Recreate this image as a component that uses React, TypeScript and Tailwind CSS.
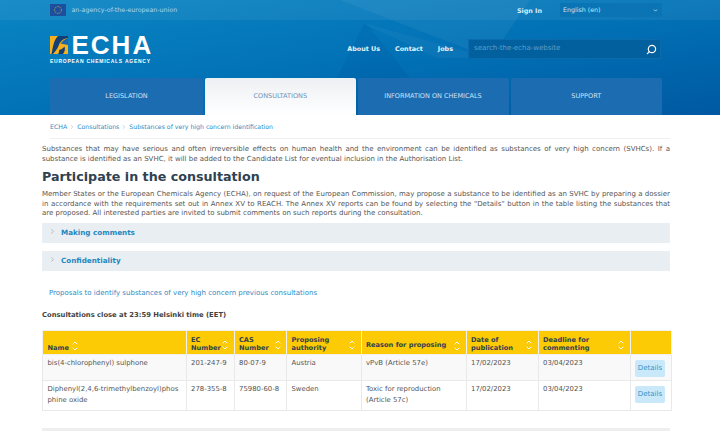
import { ChevronRight, ChevronDown, ChevronUp, Search } from 'lucide-react'

const tabs = [
  { label: 'LEGISLATION', width: 'w-[153px]' },
  { label: 'CONSULTATIONS', width: 'w-[150.5px]' },
  { label: 'INFORMATION ON CHEMICALS', width: 'w-[151px]' },
  { label: 'SUPPORT', width: 'w-[151.5px]' },
]

const columns = [
  { label: ['Name'], width: 'w-[143.5px]' },
  { label: ['EC', 'Number'], width: 'w-[48px]' },
  { label: ['CAS', 'Number'], width: 'w-[52.5px]' },
  { label: ['Proposing', 'authority'], width: 'w-[74.5px]' },
  { label: ['Reason for proposing'], width: 'w-[105px]' },
  { label: ['Date of', 'publication'], width: 'w-[72px]' },
  { label: ['Deadline for', 'commenting'], width: 'w-[92px]' },
  { label: [], width: 'w-[41px]' },
]

const rows = [
  {
    name: 'bis(4-chlorophenyl) sulphone',
    ec: '201-247-9',
    cas: '80-07-9',
    authority: 'Austria',
    reason: 'vPvB (Article 57e)',
    published: '17/02/2023',
    deadline: '03/04/2023',
    height: 'h-[26px]',
    bg: 'bg-[#f9f9f9]',
  },
  {
    name: 'Diphenyl(2,4,6-trimethylbenzoyl)phosphine oxide',
    ec: '278-355-8',
    cas: '75980-60-8',
    authority: 'Sweden',
    reason: 'Toxic for reproduction (Article 57c)',
    published: '17/02/2023',
    deadline: '03/04/2023',
    height: 'h-[30px]',
    bg: 'bg-white',
  },
]

function EuFlag() {
  return (
    <svg width="16" height="12" viewBox="0 0 16 12">
      <rect width="16" height="12" fill="#1d4f9c" />
      <circle cx="8" cy="6" r="3.4" fill="none" stroke="#c9b23c" strokeWidth="0.9" strokeDasharray="0.9 0.9" />
    </svg>
  )
}

function LogoMark() {
  return (
    <svg width="18" height="18" viewBox="0 0 18 18">
      <rect width="18" height="18" fill="#f6b01e" />
      <path d="M8 0H18V2C14 2.5 11 4.5 9.5 7.5C8.5 10 7.5 13.500 3 18H1.500C3 12 3 5 8 0Z" fill="#123f74" />
      <path d="M18 2V9C15.500 8.500 13 8 10.500 7.500C12.500 5 15 3 18 2Z" fill="#1a66a8" />
      <path d="M9 14C11.500 13.500 13 12.500 14.500 10.500C15 12.500 15.500 14.500 13 18H8C9 16.500 9.500 15.500 9 14Z" fill="#123f74" />
    </svg>
  )
}

function SortIcon() {
  return (
    <span className="flex flex-col items-center text-white">
      <ChevronUp size={8} strokeWidth={3} className="-mb-[2px]" />
      <ChevronDown size={8} strokeWidth={3} />
    </span>
  )
}

function Accordion({ title }: { title: string }) {
  return (
    <div className="flex h-5 items-center bg-[#e9eef2] pl-[7px]">
      <ChevronRight size={7} strokeWidth={2} className="-mt-[2px] text-[#8c979f]" />
      <span className="ml-[5px] text-[7.2px] font-bold text-[#1f87c0]">{title}</span>
    </div>
  )
}

function Line({ children }: { children: string }) {
  return <span className="block text-justify [text-align-last:justify]">{children}</span>
}

export default function App() {
  return (
    <div className="h-[432px] w-[720px] overflow-hidden bg-white font-['DejaVu_Sans',sans-serif] text-[7px] leading-[9.5px] text-[#555]">
      <header className="relative h-[115px] overflow-hidden bg-gradient-to-br from-[#0b86c4] via-[#0272b6] to-[#0059a2]">
        {/* background facets */}
        <svg className="absolute inset-0" width="720" height="115" viewBox="0 0 720 115">
          <path d="M340 0H530L490 58Z" fill="#ffffff" fillOpacity="0.05" />
          <path d="M360 22L490 58L437 58Z" fill="#ffffff" fillOpacity="0.04" />
          <path d="M337 78L365 22L440 115H337Z" fill="#003f8c" fillOpacity="0.1" />
        </svg>

        <div className="relative flex h-5 items-start justify-between bg-white/[0.06] pr-[58px] pl-[50px]">
          <div className="flex items-center gap-[5.5px] pt-[4px]">
            <EuFlag />
            <span className="text-[6.3px] text-[#a8d8ee]">an-agency-of-the-european-union</span>
          </div>
          <div className="flex items-start">
            <span className="pt-[7px] text-[6.4px] font-bold text-[#d7edf8]">Sign In</span>
            <div className="mt-[3px] ml-[18px] flex h-[14px] w-[102px] items-center justify-between bg-[#0a74b4] px-[3px] pr-[4px] text-[6.3px] text-[#cfe8f5]">
              English (en)
              <ChevronDown size={5} strokeWidth={4} />
            </div>
          </div>
        </div>

        <div className="relative flex h-[58px] items-start justify-between pr-[59px] pl-[50px]">
          <div className="pt-[16px]">
            <div className="flex h-[18px] items-center">
              <LogoMark />
              <span className="ml-[3.5px] font-['Liberation_Sans',sans-serif] text-[26px] leading-[18px] font-bold tracking-[2px] text-white">
                ECHA
              </span>
            </div>
            <div className="mt-[3.5px] font-['Liberation_Sans',sans-serif] text-[5px] leading-[6px] font-bold tracking-[0.75px] whitespace-nowrap text-white">
              EUROPEAN CHEMICALS AGENCY
            </div>
          </div>
          <div className="flex items-start">
            <nav className="flex gap-[15px] pt-[25px] text-[6.4px] font-bold text-[#e6f3fa]">
              <span>About Us</span>
              <span>Contact</span>
              <span>Jobs</span>
            </nav>
            <div className="mt-[19px] ml-[15px] flex h-5 w-[193px] items-center justify-between border border-[#0a6cac] bg-[#03609f] pr-[3px] pl-[5px]">
              <span className="text-[7px] text-[#5a9fc9]">search-the-echa-website</span>
              <Search size={11} strokeWidth={2.6} className="-scale-x-100 text-white" />
            </div>
          </div>
        </div>

        <nav className="relative flex gap-[2px] pr-[58px] pl-[50px]">
          {tabs.map((tab) => (
            <div
              key={tab.label}
              className={
                tab.label === 'CONSULTATIONS'
                  ? `flex h-[37px] ${tab.width} items-center justify-center rounded-t-[2px] bg-gradient-to-b from-[#edf0f3] to-white text-[6.5px] text-[#6b93bd]`
                  : `flex h-[37px] ${tab.width} items-center justify-center rounded-t-[2px] bg-[#1c6cb2] text-[6.5px] text-[#cfe3f2]`
              }
            >
              {tab.label}
            </div>
          ))}
        </nav>
      </header>

      <main className="pr-[50px] pl-[42px]">
        <div className="ml-2 flex h-6 items-center gap-[2px] border-b border-[#eef0f1] text-[6.2px] text-[#2f8ac4]">
          <span>ECHA</span>
          <ChevronRight size={6} className="text-[#99aaaa]" />
          <span>Consultations</span>
          <ChevronRight size={6} className="text-[#99aaaa]" />
          <span>Substances of very high concern identification</span>
        </div>

        <p className="mt-[6px] w-[628px]">
          <Line>Substances that may have serious and often irreversible effects on human health and the environment can be identified as substances of very high concern (SVHCs). If a</Line>
          substance is identified as an SVHC, it will be added to the Candidate List for eventual inclusion in the Authorisation List.
        </p>
        <h1 className="mt-[4px] text-[12.7px] leading-[18px] font-bold text-[#2f4252]">Participate in the consultation</h1>
        <p className="mt-[4px] w-[628px]">
          <Line>Member States or the European Chemicals Agency (ECHA), on request of the European Commission, may propose a substance to be identified as an SVHC by preparing a dossier</Line>
          <Line>in accordance with the requirements set out in Annex XV to REACH. The Annex XV reports can be found by selecting the "Details" button in the table listing the substances that</Line>
          are proposed. All interested parties are invited to submit comments on such reports during the consultation.
        </p>

        <div className="mt-[4px] flex w-[628px] flex-col gap-2">
          <Accordion title="Making comments" />
          <Accordion title="Confidentiality" />
        </div>

        <div className="mt-[18px] ml-[7px] text-[7px] text-[#2f8ac4]">
          Proposals to identify substances of very high concern previous consultations
        </div>
        <div className="mt-[12.5px] text-[6.8px] font-bold text-[#444]">Consultations close at 23:59 Helsinki time (EET)</div>

        <table className="mt-[9.5px] w-[628px] table-fixed border-collapse">
          <colgroup>
            {columns.map((col, i) => (
              <col key={i} className={col.width} />
            ))}
          </colgroup>
          <thead>
            <tr className="h-[24px] bg-[#fdca06] text-[#33414d]">
              {columns.map((col, i) => (
                <th key={i} className="border border-[#f0f0f0] px-[4.5px] pt-[3px] pb-[1px] text-left align-bottom text-[6.65px] leading-[7.8px] font-bold">
                  {col.label.length > 0 && (
                    <div className={i === 0 ? 'flex items-end gap-[2px]' : 'flex items-center justify-between'}>
                      <span>
                        {col.label.map((line) => (
                          <span key={line} className="block whitespace-nowrap">
                            {line}
                          </span>
                        ))}
                      </span>
                      <SortIcon />
                    </div>
                  )}
                </th>
              ))}
            </tr>
          </thead>
          <tbody>
            {rows.map((row) => (
              <tr key={row.ec} className={`${row.height} ${row.bg} align-top text-[6.9px]`}>
                <td className="border border-[#e9e9e9] px-[4.5px] pt-[3.5px] leading-[10.5px] break-all">{row.name}</td>
                <td className="border border-[#e9e9e9] px-[4.5px] pt-[3.5px] leading-[10.5px]">{row.ec}</td>
                <td className="border border-[#e9e9e9] px-[4.5px] pt-[3.5px] leading-[10.5px]">{row.cas}</td>
                <td className="border border-[#e9e9e9] px-[4.5px] pt-[3.5px] leading-[10.5px]">{row.authority}</td>
                <td className="border border-[#e9e9e9] px-[4.5px] pt-[3.5px] leading-[10.5px]">{row.reason}</td>
                <td className="border border-[#e9e9e9] px-[4.5px] pt-[3.5px] leading-[10.5px]">{row.published}</td>
                <td className="border border-[#e9e9e9] px-[4.5px] pt-[3.5px] leading-[10.5px]">{row.deadline}</td>
                <td className="border border-[#e9e9e9] pt-[5.5px] pl-[4.5px]">
                  <span className="flex h-[17px] w-[30px] items-center justify-center rounded-[2px] bg-[#c9e8f9] text-[7px] text-[#3b93c8]">
                    Details
                  </span>
                </td>
              </tr>
            ))}
          </tbody>
        </table>

        <div className="mt-[17px] h-[3px] w-[628px] bg-[#eeeeee]" />
      </main>
    </div>
  )
}
